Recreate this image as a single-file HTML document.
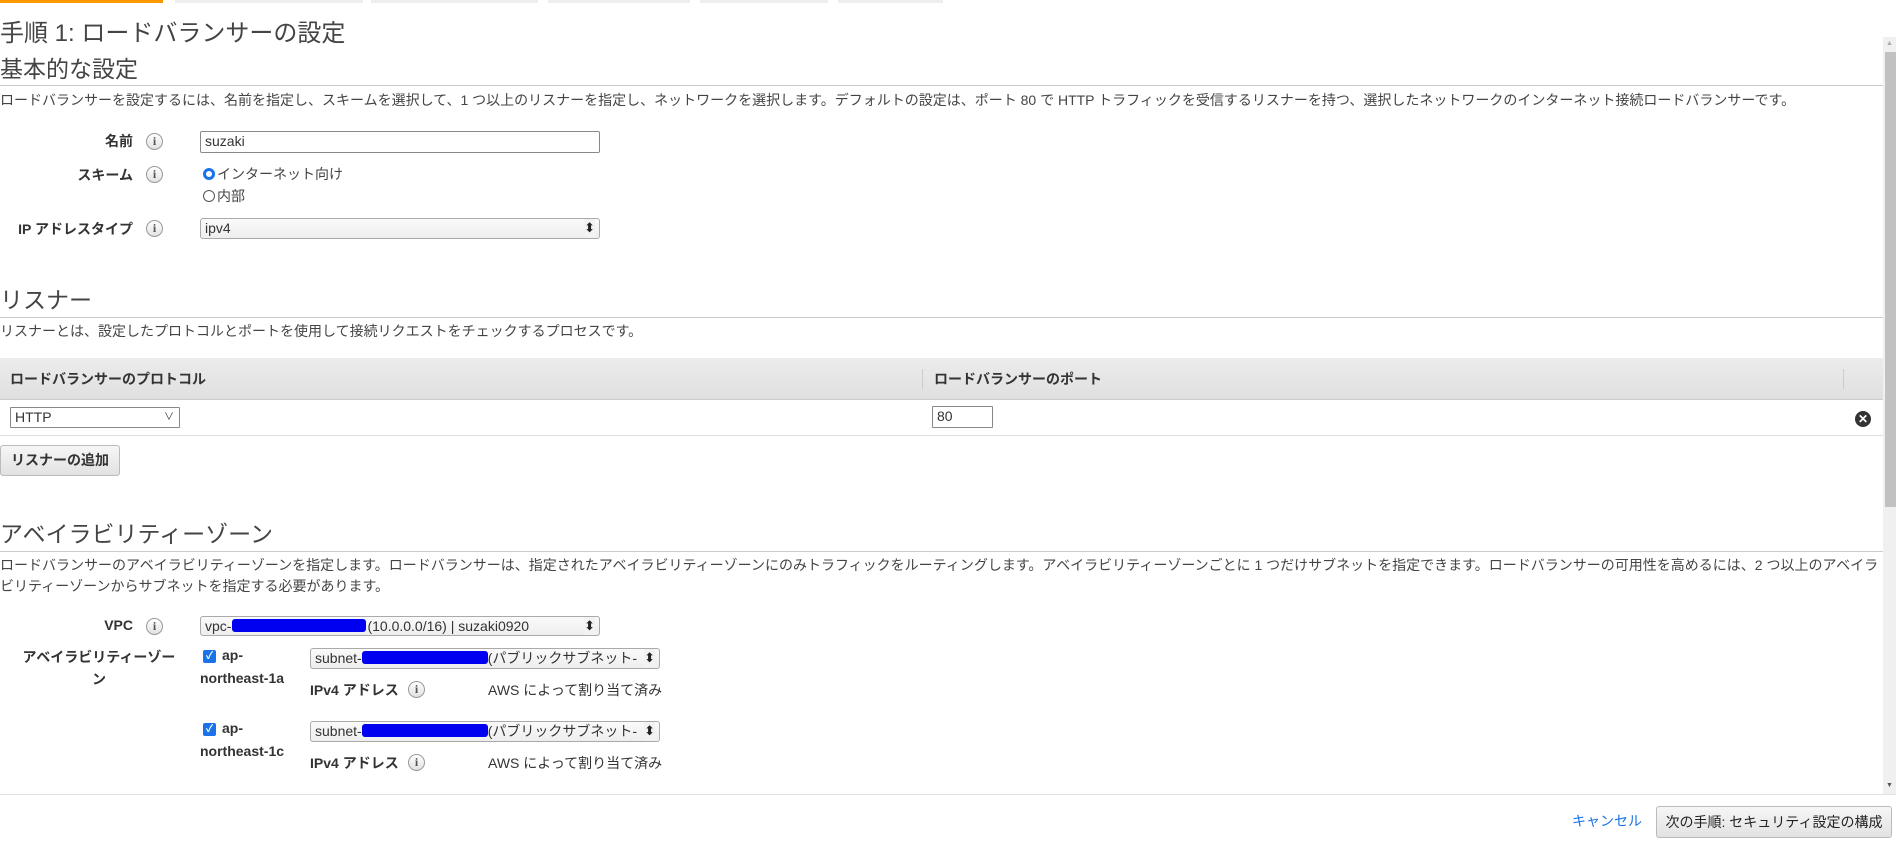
<!DOCTYPE html>
<html><head><meta charset="utf-8">
<style>
*{box-sizing:border-box;margin:0;padding:0}
body{width:1896px;height:857px;overflow:hidden;background:#fff;font-family:"Liberation Sans","Noto Sans CJK JP",sans-serif;color:#444;position:relative}
.a{position:absolute;white-space:nowrap}
.tab{position:absolute;top:0;height:3px;background:#eee}
h1{position:absolute;left:0;top:13px;font-size:24px;font-weight:normal;color:#444}
h2{position:absolute;left:0;font-size:23px;font-weight:normal;color:#444}
.hr{position:absolute;left:0;width:1883px;height:1px;background:#ccc}
.p{position:absolute;left:0;font-size:14px;color:#444;line-height:21px}
.lbl{position:absolute;font-size:14px;font-weight:bold;color:#333;text-align:right;white-space:nowrap}
.i{position:absolute;width:17px;height:17px;border:1px solid #999;border-radius:50%;background:linear-gradient(#fff,#e2e2e2);font:bold 12px "Liberation Serif",serif;color:#555;text-align:center;line-height:15px}
.inp{position:absolute;border:1px solid #888;border-radius:2px;background:#fff;font-size:14px;color:#333;padding-left:4px;line-height:19px}
.sel{position:absolute;border:1px solid #aaa;border-radius:3px;background:linear-gradient(#fafafa,#eee);font-size:14px;color:#333;padding-left:4px;line-height:18px;overflow:hidden;white-space:nowrap}
.sel:after{content:"⬍";position:absolute;right:4px;top:0;font-size:13px;color:#222;background:#f2f2f2}
.blue{position:absolute;background:#0000f0;border-radius:3px}
.cb{position:absolute;width:13px;height:13px;background:#1a73e8;border-radius:2px;color:#fff;font-size:10px;line-height:13px;text-align:center;font-weight:bold}
.btn{position:absolute;border:1px solid #bbb;border-radius:3px;background:linear-gradient(#f6f6f6,#e2e2e2);font-size:14px;font-weight:bold;color:#333;text-align:center}
</style></head><body>
<div class="tab" style="left:0;width:163px;background:#f90"></div>
<div class="tab" style="left:175px;width:188px"></div>
<div class="tab" style="left:371px;width:167px"></div>
<div class="tab" style="left:548px;width:142px"></div>
<div class="tab" style="left:700px;width:128px"></div>
<div class="tab" style="left:838px;width:105px"></div>

<h1>手順 1: ロードバランサーの設定</h1>
<h2 style="top:50px">基本的な設定</h2>
<div class="hr" style="top:85px"></div>
<div class="p" style="top:90px">ロードバランサーを設定するには、名前を指定し、スキームを選択して、1 つ以上のリスナーを指定し、ネットワークを選択します。デフォルトの設定は、ポート 80 で HTTP トラフィックを受信するリスナーを持つ、選択したネットワークのインターネット接続ロードバランサーです。</div>

<div class="lbl" style="right:1763px;top:131px">名前</div><div class="i" style="left:146px;top:133px">i</div>
<div class="inp" style="left:200px;top:131px;width:400px;height:22px">suzaki</div>
<div class="lbl" style="right:1763px;top:165px">スキーム</div><div class="i" style="left:146px;top:166px">i</div>
<div class="a" style="left:203px;top:168px;width:12px;height:12px;border-radius:50%;border:3px solid #1a73e8;background:#fff"></div>
<div class="a" style="left:217px;top:164px;font-size:14px">インターネット向け</div>
<div class="a" style="left:203px;top:190px;width:12px;height:12px;border-radius:50%;border:1px solid #555"></div>
<div class="a" style="left:217px;top:186px;font-size:14px">内部</div>
<div class="lbl" style="right:1763px;top:219px">IP アドレスタイプ</div><div class="i" style="left:146px;top:220px">i</div>
<div class="sel" style="left:200px;top:218px;width:400px;height:21px">ipv4</div>

<h2 style="top:281px">リスナー</h2>
<div class="hr" style="top:317px"></div>
<div class="p" style="top:321px">リスナーとは、設定したプロトコルとポートを使用して接続リクエストをチェックするプロセスです。</div>
<div class="a" style="left:0;top:358px;width:1883px;height:42px;background:linear-gradient(#ececec,#e0e0e0);border-bottom:1px solid #ccc"></div>
<div class="a" style="left:922px;top:369px;width:1px;height:20px;background:#ccc"></div>
<div class="a" style="left:1843px;top:369px;width:1px;height:20px;background:#ccc"></div>
<div class="a" style="left:10px;top:369px;font-size:14px;font-weight:bold;color:#333">ロードバランサーのプロトコル</div>
<div class="a" style="left:934px;top:369px;font-size:14px;font-weight:bold;color:#333">ロードバランサーのポート</div>
<div class="hr" style="top:435px;background:#ddd"></div>
<div class="inp" style="left:10px;top:407px;width:170px;height:21px;border-radius:1px">HTTP<span style="position:absolute;right:5px;font-size:10px">∨</span></div>
<div class="inp" style="left:932px;top:406px;width:61px;height:22px;border-radius:1px">80</div>
<div class="a" style="left:1855px;top:411px;width:16px;height:16px;border-radius:50%;background:#333;color:#fff;font-size:12px;font-weight:bold;text-align:center;line-height:16px">✕</div>
<div class="btn" style="left:0;top:445px;width:120px;height:31px;line-height:29px">リスナーの追加</div>

<h2 style="top:515px">アベイラビリティーゾーン</h2>
<div class="hr" style="top:551px"></div>
<div class="p" style="top:555px;width:1880px;white-space:normal">ロードバランサーのアベイラビリティーゾーンを指定します。ロードバランサーは、指定されたアベイラビリティーゾーンにのみトラフィックをルーティングします。アベイラビリティーゾーンごとに 1 つだけサブネットを指定できます。ロードバランサーの可用性を高めるには、2 つ以上のアベイラビリティーゾーンからサブネットを指定する必要があります。</div>

<div class="lbl" style="right:1763px;top:617px">VPC</div><div class="i" style="left:146px;top:618px">i</div>
<div class="sel" style="left:200px;top:616px;width:400px;height:20px">vpc-<span style="display:inline-block;width:136px"></span>(10.0.0.0/16) | suzaki0920</div>
<div class="blue" style="left:232px;top:619px;width:134px;height:13px"></div>
<div class="lbl" style="left:18px;top:646px;text-align:center;width:162px;white-space:normal;line-height:22px;padding:0 4px">アベイラビリティーゾーン</div>

<div class="cb" style="left:203px;top:650px">✓</div>
<div class="a" style="left:222px;top:647px;font-size:14px;font-weight:bold;color:#333">ap-</div>
<div class="a" style="left:200px;top:670px;font-size:14px;font-weight:bold;color:#333">northeast-1a</div>
<div class="sel" style="left:310px;top:648px;width:350px;height:21px">subnet-<span style="display:inline-block;width:126px"></span>(パブリックサブネット-</div>
<div class="blue" style="left:362px;top:651px;width:126px;height:13px"></div>
<div class="a" style="left:310px;top:680px;font-size:14px;font-weight:bold;color:#333">IPv4 アドレス</div><div class="i" style="left:408px;top:681px">i</div>
<div class="a" style="left:488px;top:680px;font-size:14px;color:#333">AWS によって割り当て済み</div>

<div class="cb" style="left:203px;top:723px">✓</div>
<div class="a" style="left:222px;top:720px;font-size:14px;font-weight:bold;color:#333">ap-</div>
<div class="a" style="left:200px;top:743px;font-size:14px;font-weight:bold;color:#333">northeast-1c</div>
<div class="sel" style="left:310px;top:721px;width:350px;height:21px">subnet-<span style="display:inline-block;width:126px"></span>(パブリックサブネット-</div>
<div class="blue" style="left:362px;top:724px;width:126px;height:13px"></div>
<div class="a" style="left:310px;top:753px;font-size:14px;font-weight:bold;color:#333">IPv4 アドレス</div><div class="i" style="left:408px;top:754px">i</div>
<div class="a" style="left:488px;top:753px;font-size:14px;color:#333">AWS によって割り当て済み</div>

<div class="a" style="left:1883px;top:37px;width:13px;height:757px;background:#f0f0f0"></div>
<div class="a" style="left:1885px;top:52px;width:11px;height:455px;background:#c1c1c1"></div>
<div class="a" style="left:1886px;top:40px;font-size:7px;color:#aaa">▲</div>
<div class="a" style="left:1886px;top:782px;font-size:7px;color:#555">▼</div>
<div class="a" style="left:0;top:794px;width:1896px;height:1px;background:#e0e0e0"></div>

<div class="a" style="left:1572px;top:811px;font-size:14px;color:#1a73e8">キャンセル</div>
<div class="btn" style="left:1656px;top:806px;width:236px;height:32px;line-height:30px;font-weight:normal;font-size:14px;color:#222">次の手順: セキュリティ設定の構成</div>
</body></html>
